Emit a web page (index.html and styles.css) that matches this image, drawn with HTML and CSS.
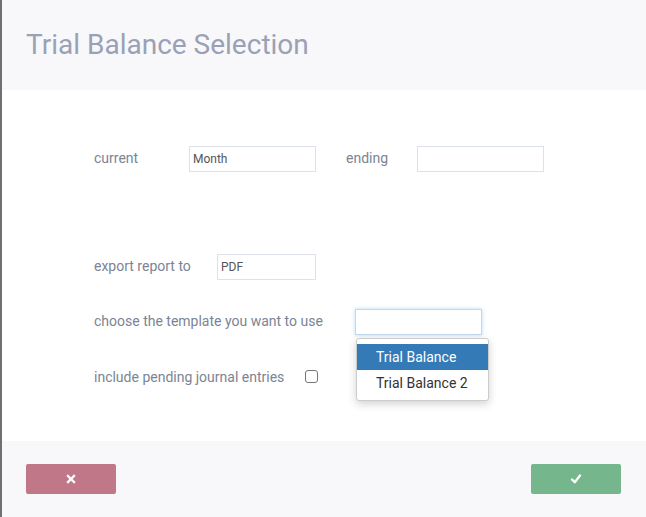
FILE: index.html
```html
<!DOCTYPE html>
<html>
<head>
<meta charset="utf-8">
<link rel="stylesheet" href="styles.css">
</head>
<body>
<div class="dialog">
  <div class="header"><h1 class="title">Trial Balance Selection</h1></div>
  <div class="content">
    <div class="row row-period">
      <span class="label label-current">current</span>
      <div class="field">Month</div>
      <span class="label label-ending">ending</span>
      <div class="field"></div>
    </div>
    <div class="row row-export">
      <span class="label label-export">export report to</span>
      <div class="field field-short">PDF</div>
    </div>
    <div class="row row-template">
      <span class="label label-template">choose the template you want to use</span>
      <div class="select-wrap">
        <div class="field field-focus"></div>
        <ul class="menu">
          <li class="menu-item active">Trial Balance</li>
          <li class="menu-item">Trial Balance 2</li>
        </ul>
      </div>
    </div>
    <div class="row row-pending">
      <span class="label label-pending">include pending journal entries</span>
      <input type="checkbox" class="check">
    </div>
  </div>
  <div class="footer">
    <button class="btn btn-cancel" type="button">
      <svg width="10" height="10" viewBox="0 0 10 10"><path d="M2 2 L8 8 M8 2 L2 8" stroke="#fff" stroke-width="2.3" stroke-linecap="square" fill="none"/></svg>
    </button>
    <button class="btn btn-ok" type="button">
      <svg width="12" height="10" viewBox="0 0 12 10"><path d="M2 5.5 L4.8 8.3 L10 1.5" stroke="#fff" stroke-width="2.3" stroke-linecap="round" stroke-linejoin="round" fill="none"/></svg>
    </button>
  </div>
</div>
</body>
</html>
```
FILE: styles.css
```css
html, body {
  margin: 0;
  padding: 0;
  background: #fff;
}
body {
  font-family: Roboto, "Liberation Sans", Arial, sans-serif;
}
.dialog {
  width: 646px;
  height: 517px;
  box-sizing: border-box;
  border-left: 2px solid #707070;
  display: flex;
  flex-direction: column;
}
.header {
  height: 90px;
  background: #f8f8fa;
  display: flex;
  align-items: center;
  padding-left: 24px;
  flex: none;
}
.title {
  margin: 0;
  font-size: 28px;
  font-weight: 400;
  color: #9aa1b7;
  line-height: 32px;
}
.content {
  height: 351px;
  flex: none;
  box-sizing: border-box;
  padding: 56px 0 0 92px;
  display: flex;
  flex-direction: column;
}
.row {
  display: flex;
  align-items: center;
  height: 26px;
}
.row-export { margin-top: 82px; }
.row-template { margin-top: 29px; }
.row-pending { margin-top: 28px; }
.label {
  font-size: 14px;
  color: #7b8494;
  padding-bottom: 2px;
  flex: none;
}
.label-current { width: 95px; padding-bottom: 3px; }
.label-ending { width: 71px; margin-left: 30px; padding-bottom: 3px; }
.label-export { width: 123px; }
.label-template { width: 261px; }
.label-pending { width: 211px; padding-bottom: 0; padding-top: 2px; }
.field {
  box-sizing: border-box;
  width: 127px;
  height: 26px;
  border: 1px solid #dde1ea;
  background: #fff;
  font-size: 12px;
  color: #555;
  line-height: 24px;
  padding: 0 3px;
}
.field-short { width: 99px; }
.field-focus {
  border-color: #c3d7ee;
  box-shadow: 0 0 4px rgba(102, 175, 233, 0.45);
}
.select-wrap {
  position: relative;
}
.menu {
  position: absolute;
  left: 1px;
  top: 29px;
  width: 133px;
  box-sizing: border-box;
  margin: 0;
  padding: 5px 0 4px;
  list-style: none;
  background: #fff;
  border: 1px solid #ccc;
  border-radius: 3px;
  box-shadow: 0 3px 8px rgba(0, 0, 0, 0.18);
  z-index: 2;
}
.menu-item {
  height: 26px;
  line-height: 26px;
  padding-left: 19px;
  font-size: 14px;
  color: #333;
  white-space: nowrap;
}
.menu-item.active {
  background: #337ab7;
  color: #fff;
}
.check {
  appearance: none;
  -webkit-appearance: none;
  width: 13px;
  height: 13px;
  margin: 0;
  border: 1px solid #767676;
  border-radius: 3px;
  background: #fff;
  box-sizing: border-box;
}
.footer {
  flex: 1;
  background: #f8f8fa;
  display: flex;
  justify-content: space-between;
  align-items: flex-start;
  padding: 23px 25px 0 24px;
}
.btn {
  width: 90px;
  height: 30px;
  border: none;
  border-radius: 2px;
  display: flex;
  align-items: center;
  justify-content: center;
  padding: 0;
}
.btn-cancel { background: #c07788; }
.btn-ok { background: #76b68c; }
```
